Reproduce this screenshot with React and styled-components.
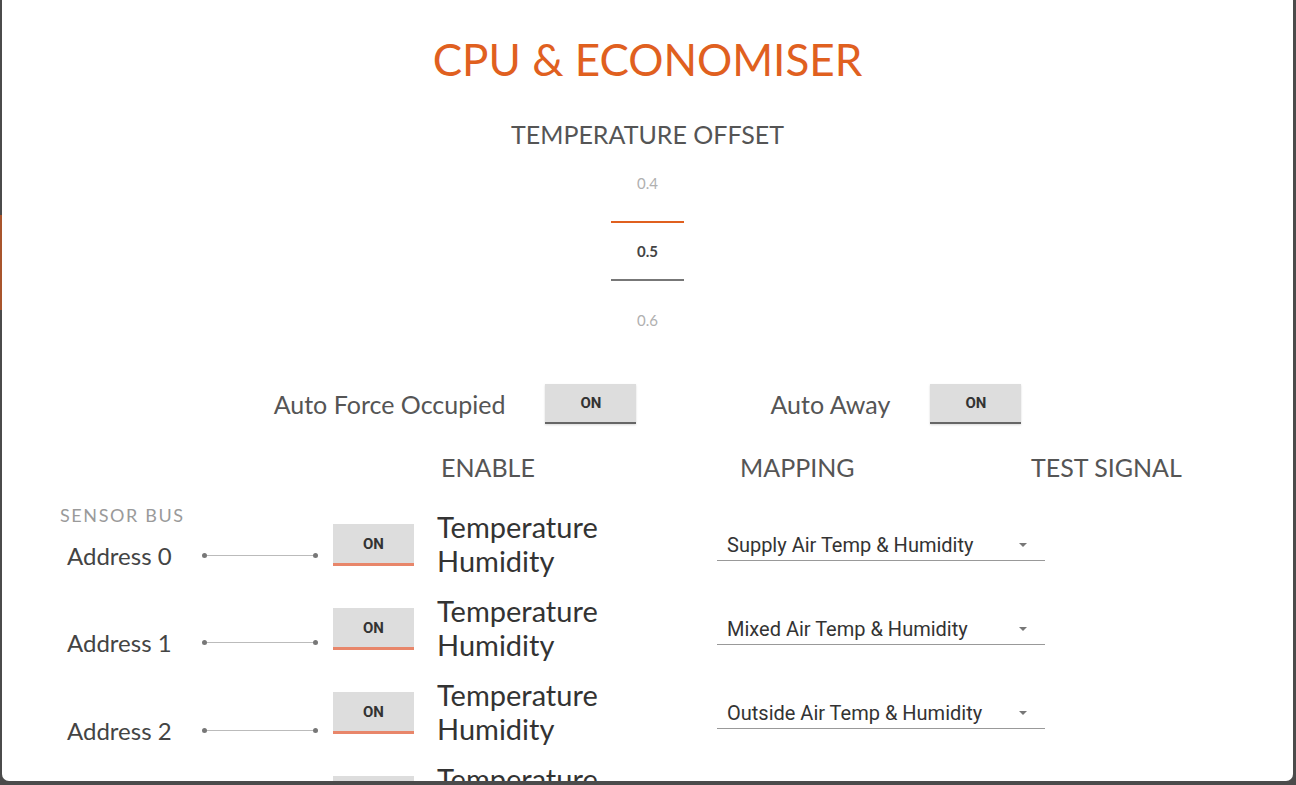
import styled, { createGlobalStyle } from "styled-components";

const GlobalStyle = createGlobalStyle`
  html, body {
    margin: 0;
    padding: 0;
    background: #4b4b4b;
    overflow: hidden;
  }
  * {
    box-sizing: border-box;
  }
`;

const channels = [
    { address: "Address 0", mapping: "Supply Air Temp & Humidity" },
    { address: "Address 1", mapping: "Mixed Air Temp & Humidity" },
    { address: "Address 2", mapping: "Outside Air Temp & Humidity" },
    { address: "Address 3", mapping: "Return Air Temp & Humidity" }
];

export default function App() {
    return (
        <>
            <GlobalStyle/>
            <Backdrop>
                <Edge>
                    <EdgeMark/>
                </Edge>
                <Dialog>
                    <Title>CPU &amp; ECONOMISER</Title>
                    <SectionLabel>TEMPERATURE OFFSET</SectionLabel>

                    <Picker>
                        <PickerValue height={66}>0.4</PickerValue>
                        <PickerSelected>0.5</PickerSelected>
                        <PickerValue height={78}>0.6</PickerValue>
                    </Picker>

                    <ToggleRow>
                        <ToggleGroup>
                            <ToggleLabel>Auto Force Occupied</ToggleLabel>
                            <ToggleButton>ON</ToggleButton>
                        </ToggleGroup>
                        <ToggleGroup>
                            <ToggleLabel>Auto Away</ToggleLabel>
                            <ToggleButton>ON</ToggleButton>
                        </ToggleGroup>
                    </ToggleRow>

                    <Headers>
                        <Header>ENABLE</Header>
                        <Header>MAPPING</Header>
                        <Header>TEST SIGNAL</Header>
                    </Headers>

                    <BusSection>
                        <SensorColumn>
                            <SensorLabel>SENSOR BUS</SensorLabel>
                            {channels.map(c => (
                                <AddressRow key={c.address}>
                                    <AddressLabel>{c.address}</AddressLabel>
                                    <Connector>
                                        <Dot/>
                                        <Wire/>
                                        <Dot/>
                                    </Connector>
                                </AddressRow>
                            ))}
                        </SensorColumn>

                        <ChannelColumn>
                            {channels.map(c => (
                                <ChannelRow key={c.address}>
                                    <EnableButton>ON</EnableButton>
                                    <Measures>
                                        <span>Temperature</span>
                                        <span>Humidity</span>
                                    </Measures>
                                    <Select>
                                        <SelectText>{c.mapping}</SelectText>
                                        <Caret/>
                                    </Select>
                                </ChannelRow>
                            ))}
                        </ChannelColumn>
                    </BusSection>
                </Dialog>
            </Backdrop>
        </>
    );
}

const Backdrop = styled.div`
  display: flex;
  width: 1296px;
  height: 785px;
  overflow: hidden;
`;

const Edge = styled.div`
  width: 2px;
  flex-shrink: 0;
  padding-top: 215px;
`;

const EdgeMark = styled.div`
  height: 95px;
  background: #a9552c;
`;

const Dialog = styled.div`
  width: 1291px;
  height: 781px;
  flex-shrink: 0;
  background: #ffffff;
  border-radius: 0 0 7px 7px;
  overflow: hidden;
  display: flex;
  flex-direction: column;
  font-family: Lato, "Open Sans", sans-serif;
  color: #555555;

  & > * {
    flex-shrink: 0;
  }
`;

const Title = styled.div`
  height: 118px;
  line-height: 118px;
  text-align: center;
  font-size: 44px;
  color: #e0601f;
`;

const SectionLabel = styled.div`
  height: 32px;
  line-height: 32px;
  text-align: center;
  font-size: 25px;
  color: #555555;
`;

const Picker = styled.div`
  display: flex;
  flex-direction: column;
  align-items: center;
`;

const PickerValue = styled.div`
  height: ${props => props.height}px;
  line-height: ${props => props.height}px;
  font-size: 15px;
  color: #b0b0b0;
`;

const PickerSelected = styled.div`
  margin-top: 5px;
  width: 73px;
  height: 60px;
  border-top: 2px solid #e0601f;
  border-bottom: 2px solid #777777;
  display: flex;
  align-items: center;
  justify-content: center;
  font-size: 15px;
  font-weight: 700;
  color: #444444;
`;

const ToggleRow = styled.div`
  margin-top: 25px;
  height: 40px;
  display: flex;
  justify-content: center;
  gap: 134px;
`;

const ToggleGroup = styled.div`
  display: flex;
  align-items: center;
  gap: 40px;
`;

const ToggleLabel = styled.span`
  font-size: 25px;
  color: #555555;
`;

const ToggleButton = styled.div`
  width: 91px;
  height: 40px;
  background: #dddddd;
  border-bottom: 2px solid #666666;
  box-shadow: 0 1px 2px rgba(0, 0, 0, 0.15);
  display: flex;
  align-items: center;
  justify-content: center;
  font-family: Roboto, sans-serif;
  font-weight: 700;
  font-size: 15px;
  color: #333333;
`;

const Headers = styled.div`
  margin-top: 24px;
  height: 38px;
  padding-left: 439px;
  display: grid;
  grid-template-columns: 299px 291px auto;
  align-items: center;
`;

const Header = styled.span`
  font-size: 25px;
  color: #555555;
`;

const BusSection = styled.div`
  display: flex;
  align-items: flex-start;
`;

const SensorColumn = styled.div`
  width: 331px;
  flex-shrink: 0;
  padding-top: 17px;
  padding-left: 58px;
  display: flex;
  flex-direction: column;
  gap: 47.5px;
`;

const SensorLabel = styled.div`
  height: 24px;
  line-height: 24px;
  margin-bottom: -39.5px;
  font-size: 18px;
  letter-spacing: 1.6px;
  color: #9a9a9a;
`;

const AddressRow = styled.div`
  height: 40px;
  display: flex;
  align-items: center;
`;

const AddressLabel = styled.span`
  width: 142px;
  padding-left: 7px;
  font-size: 24px;
  color: #444444;
`;

const Connector = styled.div`
  width: 116px;
  display: flex;
  align-items: center;
`;

const Dot = styled.span`
  width: 5px;
  height: 5px;
  border-radius: 50%;
  background: #777777;
`;

const Wire = styled.span`
  flex: 1;
  height: 1px;
  background: #bbbbbb;
`;

const ChannelColumn = styled.div`
  padding-top: 38px;
  display: flex;
  flex-direction: column;
`;

const ChannelRow = styled.div`
  height: 84px;
  flex-shrink: 0;
  display: flex;
  align-items: flex-start;
`;

const EnableButton = styled.div`
  width: 81px;
  height: 42px;
  flex-shrink: 0;
  background: #dddddd;
  border-bottom: 3px solid #e8866a;
  display: flex;
  align-items: center;
  justify-content: center;
  font-family: Roboto, sans-serif;
  font-weight: 700;
  font-size: 15px;
  color: #333333;
`;

const Measures = styled.div`
  width: 280px;
  flex-shrink: 0;
  margin-left: 23px;
  margin-top: -14px;
  display: flex;
  flex-direction: column;
  font-size: 29px;
  line-height: 34px;
  color: #333333;
`;

const Select = styled.div`
  width: 328px;
  height: 32px;
  flex-shrink: 0;
  margin-top: 5px;
  padding: 0 18px 0 10px;
  border-bottom: 1px solid #999999;
  display: flex;
  align-items: center;
  justify-content: space-between;
`;

const SelectText = styled.span`
  font-family: Roboto, sans-serif;
  font-size: 20px;
  color: #333333;
`;

const Caret = styled.span`
  width: 0;
  height: 0;
  border-left: 4px solid transparent;
  border-right: 4px solid transparent;
  border-top: 4px solid #777777;
`;
